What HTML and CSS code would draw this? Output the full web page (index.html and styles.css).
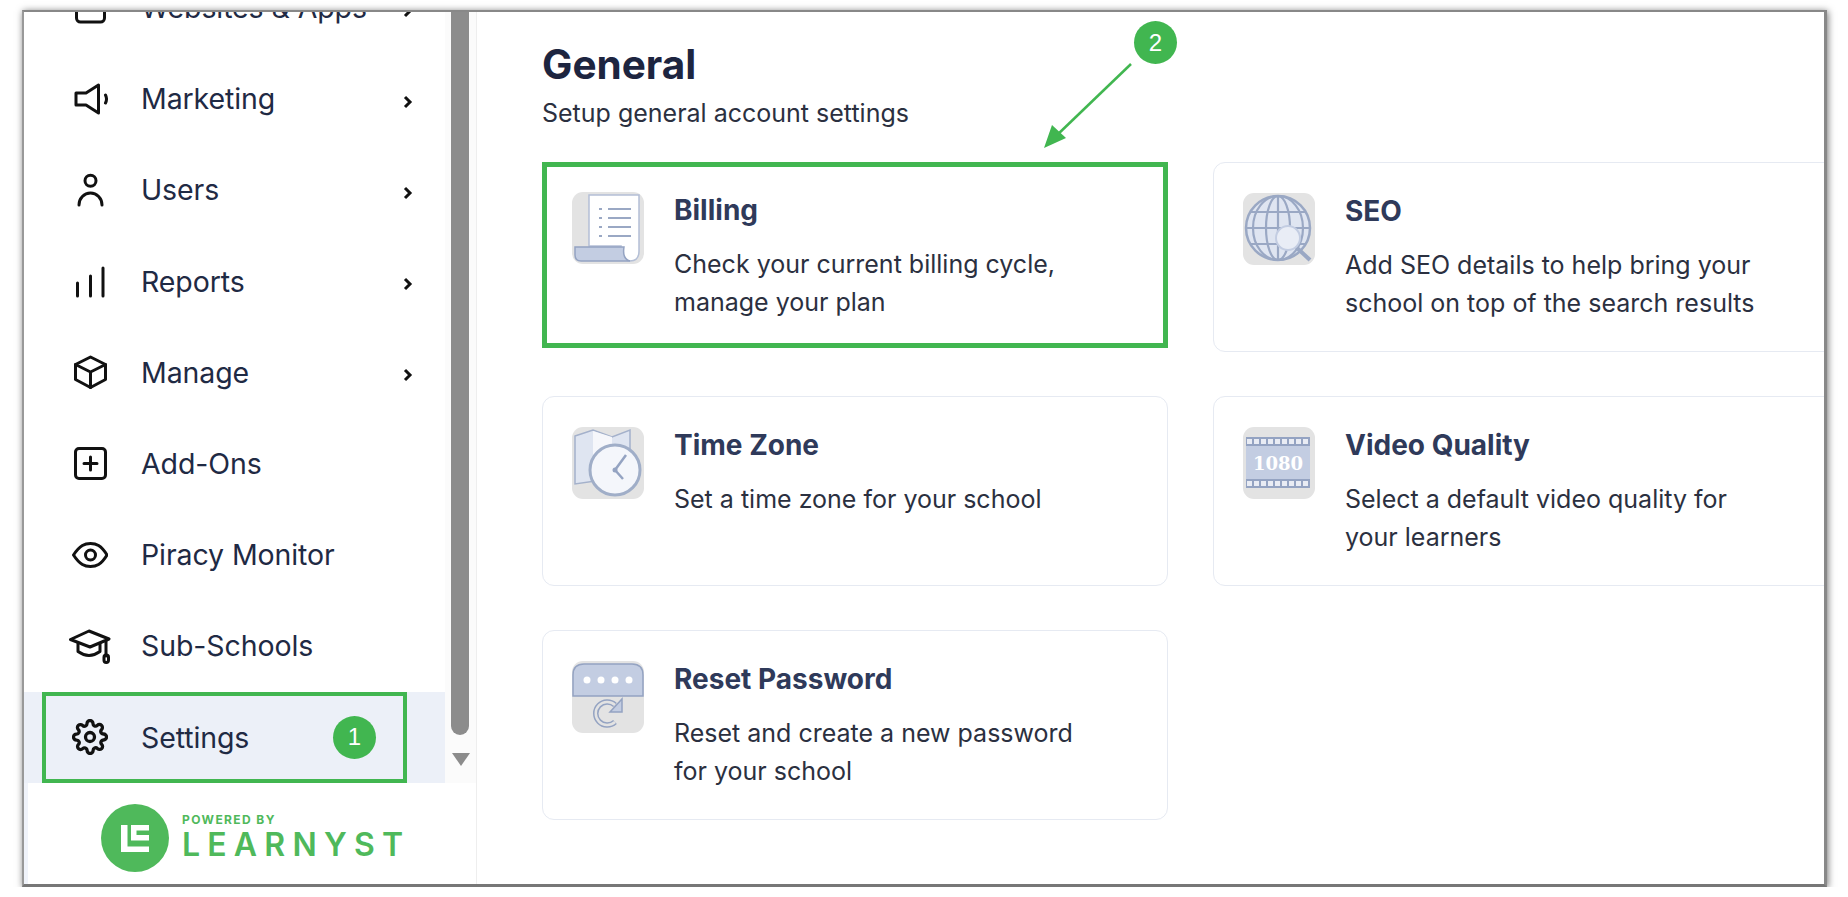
FILE: index.html
```html
<!DOCTYPE html>
<html lang="en">
<head>
    <meta charset="UTF-8">
    <meta name="viewport" content="width=device-width, initial-scale=1.0">
    <title>General settings</title>
    <link rel="stylesheet" href="styles.css">
</head>
<body>
    <div class="window">
        <aside class="sidebar">
            <div class="nav-wrap">
                <nav class="nav">
                    <a class="nav-item">
                        <svg class="nav-icon" viewBox="0 0 36 36"><rect x="4.5" y="4" width="28" height="28" rx="4"/></svg>
                        <span class="nav-label">Websites &amp; Apps</span>
                        <svg class="chevron" viewBox="0 0 12 14"><path d="M3 2l5 5-5 5"/></svg>
                    </a>
                    <a class="nav-item">
                        <svg class="nav-icon" viewBox="0 0 36 36"><path d="M4 12h10L26.5 4v28L14 24H4z"/><path d="M33.5 14q2 4 0 8"/></svg>
                        <span class="nav-label">Marketing</span>
                        <svg class="chevron" viewBox="0 0 12 14"><path d="M3 2l5 5-5 5"/></svg>
                    </a>
                    <a class="nav-item">
                        <svg class="nav-icon" viewBox="0 0 36 36"><circle cx="18.5" cy="8.8" r="5.5"/><path d="M7 33a11.5 12 0 0 1 23 0"/></svg>
                        <span class="nav-label">Users</span>
                        <svg class="chevron" viewBox="0 0 12 14"><path d="M3 2l5 5-5 5"/></svg>
                    </a>
                    <a class="nav-item">
                        <svg class="nav-icon" viewBox="0 0 36 36"><path d="M5.5 20v13M18.5 13v20M31 5v28"/></svg>
                        <span class="nav-label">Reports</span>
                        <svg class="chevron" viewBox="0 0 12 14"><path d="M3 2l5 5-5 5"/></svg>
                    </a>
                    <a class="nav-item">
                        <svg class="nav-icon" viewBox="0 0 36 36"><path d="M18.5 3l15 7.5v15l-15 8-15-8v-15z"/><path d="M3.5 10.5l15 7.5 15-7.5M18.5 18v15.5"/></svg>
                        <span class="nav-label">Manage</span>
                        <svg class="chevron" viewBox="0 0 12 14"><path d="M3 2l5 5-5 5"/></svg>
                    </a>
                    <a class="nav-item">
                        <svg class="nav-icon" viewBox="0 0 36 36"><rect x="3.5" y="2.5" width="30" height="30" rx="3.5"/><path d="M18.5 11v13M12 17.5h13"/></svg>
                        <span class="nav-label">Add-Ons</span>
                    </a>
                    <a class="nav-item">
                        <svg class="nav-icon" viewBox="0 0 36 36"><path d="M1.5 18C8 8 13 6.5 18.5 6.5S29 8 35 18c-6 10-11 11.5-16.5 11.5S8 28 1.5 18z"/><circle cx="18.5" cy="18" r="5"/></svg>
                        <span class="nav-label">Piracy Monitor</span>
                    </a>
                    <a class="nav-item">
                        <svg class="nav-icon hat" viewBox="0 0 42 36"><path d="M1.5 11.5L20 3l20 8-19 8z"/><path d="M9 15.5v8c7 5 15 5 22 0v-8"/><path d="M37 13v15"/><rect x="35" y="27" width="4.5" height="7.5" rx="2.2"/></svg>
                        <span class="nav-label">Sub-Schools</span>
                    </a>
                    <a class="nav-item active">
                        <svg class="nav-icon" viewBox="0 0 24 24"><circle cx="12" cy="12" r="3"/><path class="thin" d="M19.4 15a1.65 1.65 0 0 0 .33 1.82l.06.06a2 2 0 0 1 0 2.83 2 2 0 0 1-2.83 0l-.06-.06a1.65 1.65 0 0 0-1.82-.33 1.65 1.65 0 0 0-1 1.51V21a2 2 0 0 1-2 2 2 2 0 0 1-2-2v-.09A1.65 1.65 0 0 0 9 19.4a1.65 1.65 0 0 0-1.82.33l-.06.06a2 2 0 0 1-2.83 0 2 2 0 0 1 0-2.83l.06-.06a1.65 1.65 0 0 0 .33-1.82 1.65 1.65 0 0 0-1.51-1H3a2 2 0 0 1-2-2 2 2 0 0 1 2-2h.09A1.65 1.65 0 0 0 4.6 9a1.65 1.65 0 0 0-.33-1.82l-.06-.06a2 2 0 0 1 0-2.83 2 2 0 0 1 2.83 0l.06.06a1.65 1.65 0 0 0 1.82.33H9a1.65 1.65 0 0 0 1-1.51V3a2 2 0 0 1 2-2 2 2 0 0 1 2 2v.09a1.65 1.65 0 0 0 1 1.51 1.65 1.65 0 0 0 1.82-.33l.06-.06a2 2 0 0 1 2.83 0 2 2 0 0 1 0 2.83l-.06.06a1.65 1.65 0 0 0-.33 1.82V9a1.65 1.65 0 0 0 1.51 1H21a2 2 0 0 1 2 2 2 2 0 0 1-2 2h-.09a1.65 1.65 0 0 0-1.51 1z"/></svg>
                        <span class="nav-label">Settings</span>
                        <span class="step step-one">1</span>
                    </a>
                </nav>
                <div class="scrollbar">
                    <div class="scroll-thumb"></div>
                    <svg class="scroll-arrow" viewBox="0 0 20 15"><path d="M1 1h18l-9 13z"/></svg>
                </div>
            </div>
            <div class="powered">
                <svg class="powered-mark" viewBox="0 0 68 68">
                    <circle cx="34" cy="34" r="34"/>
                    <path d="M20 21h6.5v21.500H48V48H20z"/>
                    <path d="M30 21h18v5.5H35.5v4.5H48v5.5H30z"/>
                </svg>
                <div class="powered-text">
                    <div class="powered-by">POWERED BY</div>
                    <div class="powered-name">LEARNYST</div>
                </div>
            </div>
        </aside>

        <main class="content">
            <h1>General</h1>
            <p class="subtitle">Setup general account settings</p>
            <span class="step step-two">2</span>
            <svg class="step-arrow" viewBox="0 0 92 87"><path d="M88 2L12 75"/><path class="head" d="M1 86l8-23 14 13z"/></svg>

            <div class="cards">
                <div class="card highlighted">
                    <svg class="card-icon" viewBox="0 0 72 72">
                        <rect class="tile" width="72" height="72" rx="11"/>
                        <path class="sheet" d="M17 3h50v56q0 10-9 10-11-1-9-15H17z"/>
                        <path class="roll" d="M3 55h49q-2 12 6 14H9q-6 0-6-6z"/>
                        <path class="rule" d="M36 17h23M36 26h23M36 35h23M36 44h23"/>
                        <path class="rule" d="M27 17h3M27 26h3M27 35h3M27 44h3"/>
                    </svg>
                    <div class="card-body">
                        <h3>Billing</h3>
                        <p>Check your current billing cycle, manage your plan</p>
                    </div>
                </div>
                <div class="card">
                    <svg class="card-icon" viewBox="0 0 72 72">
                        <rect class="tile" width="72" height="72" rx="11"/>
                        <circle class="ball" cx="35" cy="35" r="32"/>
                        <ellipse class="grid" cx="35" cy="35" rx="12" ry="32"/>
                        <ellipse class="grid" cx="35" cy="35" rx="25" ry="32"/>
                        <path class="grid" d="M35 3v64M3 35h64M8 19h54M8 51h54"/>
                        <path class="handle" d="M53 54l14 13"/>
                        <circle class="lens" cx="45" cy="45" r="12"/>
                    </svg>
                    <div class="card-body">
                        <h3>SEO</h3>
                        <p>Add SEO details to help bring your school on top of the search results</p>
                    </div>
                </div>
                <div class="card">
                    <svg class="card-icon" viewBox="0 0 72 72">
                        <rect class="tile" width="72" height="72" rx="11"/>
                        <path class="map" d="M3 9l18-6 19 7 18-7v46L3 57z"/>
                        <path class="map-fold" d="M21 4l19 6v34H21z"/>
                        <circle class="clock" cx="43" cy="43" r="25"/>
                        <path class="hand" d="M43 43l11-15M43 43l8 9"/>
                        <circle class="pin" cx="43" cy="43" r="2.5"/>
                    </svg>
                    <div class="card-body">
                        <h3>Time Zone</h3>
                        <p>Set a time zone for your school</p>
                    </div>
                </div>
                <div class="card">
                    <svg class="card-icon" viewBox="0 0 72 72">
                        <defs>
                            <pattern id="holes" x="4" y="0" width="7" height="72" patternUnits="userSpaceOnUse">
                                <rect y="12" width="5" height="5" fill="#e9ecf4"/>
                                <rect y="54" width="5" height="5" fill="#e9ecf4"/>
                            </pattern>
                        </defs>
                        <rect class="tile" width="72" height="72" rx="11"/>
                        <rect class="film" x="3" y="10" width="64" height="51"/>
                        <path class="film-band" d="M3 10h64v9H3zM3 52h64v9H3z"/>
                        <rect x="3" y="10" width="64" height="51" fill="url(#holes)"/>
                        <text class="film-text" x="35" y="42.5">1080</text>
                    </svg>
                    <div class="card-body">
                        <h3>Video Quality</h3>
                        <p>Select a default video quality for your learners</p>
                    </div>
                </div>
                <div class="card">
                    <svg class="card-icon" viewBox="0 0 72 72">
                        <rect class="tile" width="72" height="72" rx="11"/>
                        <path class="band" d="M1 14q0-11 11-11h48q11 0 11 11v21H1z"/>
                        <circle class="pin-dot" cx="15" cy="19" r="3.5"/>
                        <circle class="pin-dot" cx="29" cy="19" r="3.5"/>
                        <circle class="pin-dot" cx="43" cy="19" r="3.5"/>
                        <circle class="pin-dot" cx="57" cy="19" r="3.5"/>
                        <path class="refresh" d="M43 61A11.5 11.5 0 1 1 43 44"/>
                        <path class="refresh-in" d="M43 61A11.5 11.5 0 1 1 43 44"/>
                        <path class="refresh-tip" d="M50 38v13H38z"/>
                    </svg>
                    <div class="card-body">
                        <h3>Reset Password</h3>
                        <p>Reset and create a new password for your school</p>
                    </div>
                </div>
            </div>
        </main>
    </div>
</body>
</html>
```

FILE: styles.css
```css
*, *::after {
    box-sizing: border-box;
}
body {
    margin: 0;
    background-color: #ffffff;
    font-family: "Inter", sans-serif;
    color: #1f2a44;
}
.window {
    display: flex;
    width: 1805px;
    height: 877px;
    margin: 10px 0 0 22px;
    background-color: #ffffff;
    overflow: hidden;
    border-top: 2px solid #888;
    border-left: 2px solid #999;
    border-right: 3px solid #888;
    border-bottom: 3px solid #777;
    box-shadow: 1px 1px 7px rgba(0, 0, 0, 0.55);
}

/* sidebar */
.sidebar {
    display: flex;
    flex-direction: column;
    flex: 0 0 453px;
    border-right: 1px solid #eeeeee;
}
.nav-wrap {
    display: flex;
    flex: 1;
    min-height: 0;
}
.nav {
    flex: 0 0 421px;
    margin-top: -50px;
}
.nav-item {
    position: relative;
    display: flex;
    align-items: center;
    height: 91.2px;
    padding: 0 31px 0 48px;
}
.nav-item.active {
    background-color: #ecf0f8;
}
.nav-item.active::after {
    content: "";
    position: absolute;
    top: 0;
    bottom: 0;
    left: 18px;
    width: 365px;
    border: 4.5px solid #41b650;
}
.nav-icon {
    flex: none;
    width: 36px;
    height: 36px;
    fill: none;
    stroke: #111111;
    stroke-width: 3;
    stroke-linecap: round;
    stroke-linejoin: round;
}
.nav-icon .thin,
.nav-icon circle {
    stroke-width: 2.2;
}
.nav-item:nth-child(3) .nav-icon circle,
.nav-item:nth-child(7) .nav-icon circle {
    stroke-width: 3;
}
.nav-icon.hat {
    width: 42px;
    margin: 0 -3px;
}
.nav-label {
    margin-left: 33px;
    font-size: 28.5px;
    letter-spacing: -0.1px;
    flex: 1;
}
.chevron {
    flex: none;
    width: 12px;
    height: 14px;
    margin-top: 6px;
    fill: none;
    stroke: #111111;
    stroke-width: 3;
}
.step {
    display: flex;
    align-items: center;
    justify-content: center;
    width: 43px;
    height: 43px;
    border-radius: 50%;
    background-color: #41b650;
    color: #ffffff;
    font-family: "Liberation Sans", sans-serif;
    font-size: 24px;
}
.step-one {
    flex: none;
    margin-right: 38px;
}
.scrollbar {
    flex: 0 0 31px;
    padding-left: 6px;
    background-color: #fbfbfb;
    overflow: hidden;
}
.scroll-thumb {
    width: 18px;
    height: 723px;
    background-color: #8c8c8c;
    border-radius: 0 0 9px 9px;
}
.scroll-arrow {
    display: block;
    width: 20px;
    height: 15px;
    margin-top: 17px;
    fill: #8c8c8c;
}
.powered {
    display: flex;
    align-items: center;
    flex: 0 0 101px;
    padding: 8px 0 0 73px;
    border-left: 4px solid #f0f3fa;
}
.powered-mark {
    flex: none;
    width: 68px;
    height: 68px;
    fill: #4fb95b;
}
.powered-mark path {
    fill: #ffffff;
}
.powered-text {
    margin-left: 13px;
    color: #4fb95b;
    font-weight: 600;
}
.powered-by {
    font-size: 12px;
    letter-spacing: 1.4px;
    line-height: 14px;
    font-weight: 700;
}
.powered-name {
    font-size: 32px;
    letter-spacing: 7.2px;
    line-height: 34px;
    margin-top: 1px;
}

/* main */
.content {
    position: relative;
    flex: 1;
    padding: 31px 0 0 65px;
    min-width: 0;
}
h1 {
    margin: 0;
    font-size: 40.5px;
    line-height: 44px;
    font-weight: 700;
    color: #1d2540;
}
.subtitle {
    margin: 10px 0 0;
    font-size: 25px;
    line-height: 32px;
    color: #2b3040;
}
.step-two {
    position: absolute;
    top: 9px;
    left: 657px;
}
.step-arrow {
    position: absolute;
    top: 50px;
    left: 566px;
    width: 92px;
    height: 87px;
    fill: none;
    stroke: #41b650;
    stroke-width: 2.5;
}
.step-arrow .head {
    fill: #41b650;
    stroke: none;
}
.cards {
    display: grid;
    grid-template-columns: 626px 626px;
    grid-auto-rows: 190px;
    gap: 44px 45px;
    margin-top: 33px;
}
.card {
    display: flex;
    gap: 30px;
    padding: 30px 29px;
    border: 1px solid #e6eaf2;
    border-radius: 12px;
}
.card.highlighted {
    border: 5px solid #41b650;
    border-radius: 0;
    padding: 25px 25px;
    height: 186px;
}
.card-icon {
    flex: none;
    width: 72px;
    height: 72px;
}
.card-body h3 {
    margin: 0;
    font-size: 28px;
    line-height: 36px;
    font-weight: 700;
    color: #2f3a5a;
}
.card-body p {
    margin: 17px 0 0;
    max-width: 425px;
    font-size: 25px;
    line-height: 38px;
    color: #2b3040;
}

/* card artwork */
.tile {
    fill: #e3e3e3;
}
.sheet {
    fill: #ffffff;
    stroke: #b4bfd6;
    stroke-width: 1.5;
}
.roll {
    fill: #c3cde2;
    stroke: #94a3c2;
    stroke-width: 1.5;
}
.rule {
    fill: none;
    stroke: #9aa8c4;
    stroke-width: 2.2;
}
.ball {
    fill: #dfe5f1;
    stroke: #9aa8c4;
    stroke-width: 2.5;
}
.grid {
    fill: none;
    stroke: #9aa8c4;
    stroke-width: 2.2;
}
.handle {
    stroke: #9aa8c4;
    stroke-width: 4;
}
.lens {
    fill: #e9edf6;
    stroke: #c3cde2;
    stroke-width: 2;
}
.map {
    fill: #dfe5f1;
    stroke: #a4b1cb;
    stroke-width: 1.5;
}
.map-fold {
    fill: #f6f7fb;
}
.clock {
    fill: #f4f6fb;
    stroke: #a0aec8;
    stroke-width: 3;
}
.hand {
    fill: none;
    stroke: #94a3c2;
    stroke-width: 2.5;
}
.pin {
    fill: #94a3c2;
}
.film {
    fill: #c3cde2;
}
.film-band {
    fill: #94a3c2;
}
.film-text {
    fill: #ffffff;
    font-family: "DejaVu Serif", serif;
    font-size: 18px;
    font-weight: 700;
    text-anchor: middle;
}
.band {
    fill: #c3cde2;
    stroke: #94a3c2;
    stroke-width: 1.5;
}
.pin-dot {
    fill: #ffffff;
}
.refresh {
    fill: none;
    stroke: #94a3c2;
    stroke-width: 5.5;
}
.refresh-in {
    fill: none;
    stroke: #e3e3e3;
    stroke-width: 2.5;
}
.refresh-tip {
    fill: #c3cde2;
    stroke: #94a3c2;
    stroke-width: 1.5;
}
```
